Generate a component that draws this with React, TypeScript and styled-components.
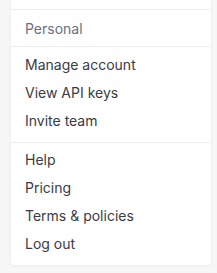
import styled, { createGlobalStyle } from "styled-components";

const GlobalStyle = createGlobalStyle`
  html, body {
    margin: 0;
    padding: 0;
    background: #f7f7f8;
  }
  body {
    font-family: Inter, "Noto Sans", sans-serif;
    -webkit-font-smoothing: antialiased;
  }
`;

const Page = styled.div`
  width: 217px;
  height: 273px;
  padding-left: 11px;
  box-sizing: border-box;
  overflow: hidden;
`;

const Menu = styled.div`
  width: 200px;
  background: #ffffff;
  border-radius: 0 0 4px 4px;
  box-shadow: 0 1px 4px rgba(0, 0, 0, 0.06);
  display: flex;
  flex-direction: column;
`;

const Section = styled.div<{ $pt?: number; $pb?: number }>`
  display: flex;
  flex-direction: column;
  padding-top: ${(p) => p.$pt ?? 0}px;
  padding-bottom: ${(p) => p.$pb ?? 0}px;
  & + & {
    border-top: 1px solid #ececf1;
  }
`;

const Spacer = styled.div`
  height: 9px;
`;

const Header = styled.div`
  height: 36px;
  display: flex;
  align-items: center;
  padding: 0 14px;
  font-size: 14px;
  color: #6e6e80;
`;

const Item = styled.a`
  height: 28px;
  display: flex;
  align-items: center;
  padding: 0 14px;
  font-size: 14px;
  color: #3a3b44;
  text-decoration: none;
  cursor: pointer;
  &:hover {
    background: #f7f7f8;
  }
`;

const accountItems = ["Manage account", "View API keys", "Invite team"];
const helpItems = ["Help", "Pricing", "Terms & policies", "Log out"];

export default function App() {
  return (
    <>
      <GlobalStyle />
      <Page>
        <Menu>
          <Section>
            <Spacer />
          </Section>
          <Section>
            <Header>Personal</Header>
          </Section>
          <Section $pt={3} $pb={8}>
            {accountItems.map((label) => (
              <Item key={label}>{label}</Item>
            ))}
          </Section>
          <Section $pt={2} $pb={8}>
            {helpItems.map((label) => (
              <Item key={label}>{label}</Item>
            ))}
          </Section>
        </Menu>
      </Page>
    </>
  );
}
